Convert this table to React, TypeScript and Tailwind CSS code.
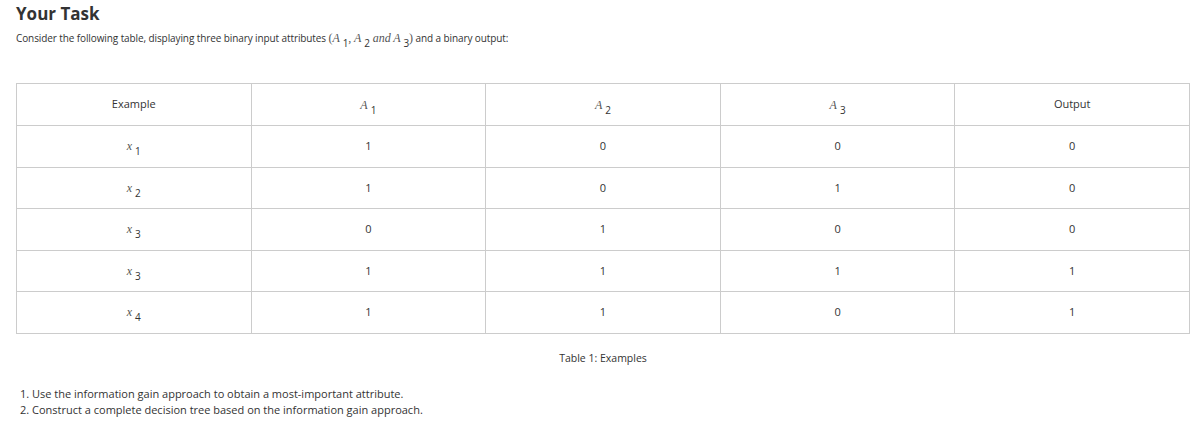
import React from 'react';

const serif = { fontFamily: '"Liberation Serif", serif' };

const Sym: React.FC<{ v: string; s: string }> = ({ v, s }) => (
  <span className="whitespace-nowrap" style={serif}>
    <span className="italic text-[12px] text-[#555]">{v}</span>
    <span
      className="inline-block align-baseline text-[10px] ml-[3px] relative top-[5px] text-[#333] leading-none"
      style={{ fontFamily: '"Open Sans", sans-serif' }}
    >
      {s}
    </span>
  </span>
);

const rows: [string, string, string, string, string][] = [
  ['1', '1', '0', '0', '0'],
  ['2', '1', '0', '1', '0'],
  ['3', '0', '1', '0', '0'],
  ['3', '1', '1', '1', '1'],
  ['4', '1', '1', '0', '1'],
];

const App: React.FC = () => {
  return (
    <div className="bg-white text-[#333] px-4 pt-[2px] h-[426px]" style={{ fontFamily: '"Open Sans", sans-serif' }}>
      <h1 className="text-[17px] font-bold leading-[24px] text-[#333]">Your Task</h1>
      <p className="text-[10px] tracking-[-0.1px] mt-[3px] leading-[18px]">
        Consider the following table, displaying three binary input attributes{' '}
        <span style={serif} className="text-[12px] text-[#555]">(</span>
        <Sym v="A" s="1" />
        <span className="text-[12px] text-[#555]" style={serif}>, </span>
        <Sym v="A" s="2" />
        <span className="italic text-[12px] text-[#555]" style={serif}> and </span>
        <Sym v="A" s="3" />
        <span className="text-[12px] text-[#555]" style={serif}>)</span> and a binary output:
      </p>

      <table className="mt-[35px] w-[1174px] border-collapse table-fixed text-[11px]">
        <thead>
          <tr className="h-[42px]">
            <th className="border border-[#ccc] font-normal">Example</th>
            <th className="border border-[#ccc] font-normal"><Sym v="A" s="1" /></th>
            <th className="border border-[#ccc] font-normal"><Sym v="A" s="2" /></th>
            <th className="border border-[#ccc] font-normal"><Sym v="A" s="3" /></th>
            <th className="border border-[#ccc] font-normal">Output</th>
          </tr>
        </thead>
        <tbody>
          {rows.map((r, i) => (
            <tr key={i} className="h-[41.5px]">
              <td className="border border-[#ccc] text-center"><Sym v="x" s={r[0]} /></td>
              <td className="border border-[#ccc] text-center">{r[1]}</td>
              <td className="border border-[#ccc] text-center">{r[2]}</td>
              <td className="border border-[#ccc] text-center">{r[3]}</td>
              <td className="border border-[#ccc] text-center">{r[4]}</td>
            </tr>
          ))}
        </tbody>
      </table>

      <p className="text-[10.5px] text-center mt-[17px] w-[1174px]">Table 1: Examples</p>

      <ol className="text-[11px] mt-[20px] pl-1 leading-[16px]">
        <li>1. Use the information gain approach to obtain a most-important attribute.</li>
        <li>2. Construct a complete decision tree based on the information gain approach.</li>
      </ol>
    </div>
  );
};

export default App;
